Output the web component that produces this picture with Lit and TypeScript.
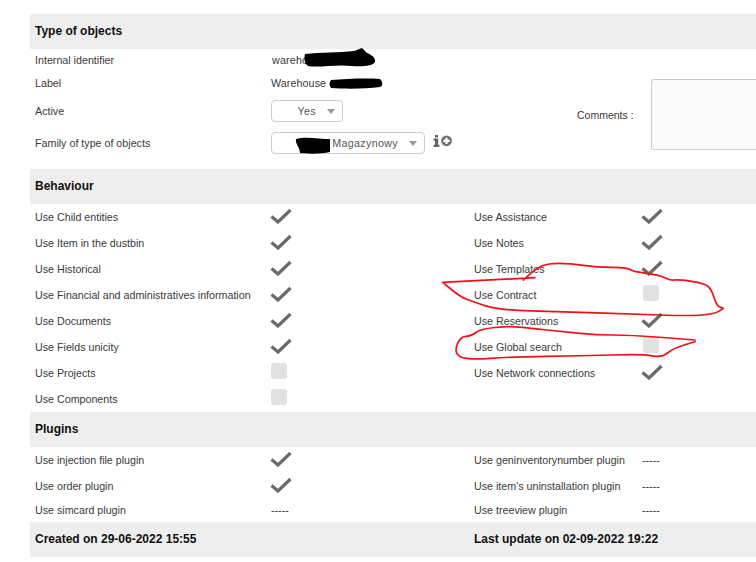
import { LitElement, html, css, svg } from "lit";
import { customElement } from "lit/decorators.js";

type V = "check" | "box" | "none";
const behaviour: [string, V, string, V][] = [
  ["Use Child entities", "check", "Use Assistance", "check"],
  ["Use Item in the dustbin", "check", "Use Notes", "check"],
  ["Use Historical", "check", "Use Templates", "check"],
  ["Use Financial and administratives information", "check", "Use Contract", "box"],
  ["Use Documents", "check", "Use Reservations", "check"],
  ["Use Fields unicity", "check", "Use Global search", "box"],
  ["Use Projects", "box", "Use Network connections", "check"],
  ["Use Components", "box", "", "none"],
];
const plugins: [string, V, string, V][] = [
  ["Use injection file plugin", "check", "Use geninventorynumber plugin", "none"],
  ["Use order plugin", "check", "Use item's uninstallation plugin", "none"],
  ["Use simcard plugin", "none", "Use treeview plugin", "none"],
];

type P = [number, number];
const scribbleA: P[] = [
  [535, 277.7], [500, 279.5], [442.7, 282.3], [442.7, 282.3], [460, 296.7], [473.3, 301.7], [498.3, 310],
  [563.3, 311.7], [630, 314], [690, 316], [715, 314], [723.3, 308.3], [723.3, 308.3], [716.7, 306],
  [711.7, 290], [705, 283.3], [678.3, 279.3], [670, 280.7], [660, 275], [633.3, 271.7], [626.7, 267.3],
  [596.7, 267.3], [570, 263.3], [548.3, 263.3], [536.7, 268.3], [523.3, 280],
];
const scribbleB: P[] = [
  [695, 340], [695, 340], [630, 335], [596.7, 335], [563.3, 331.7], [530, 328.3], [510, 326], [480, 329],
  [471.7, 336], [460, 336.7], [454, 353.3], [466.7, 360], [513.3, 356.7], [580, 356], [643.3, 354],
  [661.7, 357.7], [673.3, 348.3], [695, 341.7],
];

function smooth(pts: P[]): string {
  let d = `M${pts[0][0]} ${pts[0][1]}`;
  for (let i = 1; i < pts.length - 1; i++) {
    const mx = (pts[i][0] + pts[i + 1][0]) / 2;
    const my = (pts[i][1] + pts[i + 1][1]) / 2;
    d += ` Q${pts[i][0]} ${pts[i][1]} ${mx} ${my}`;
  }
  const last = pts[pts.length - 1];
  return d + ` L${last[0]} ${last[1]}`;
}

@customElement("app-root")
export class AppRoot extends LitElement {
  static styles = css`
    :host {
      display: block;
      position: relative;
      width: 756px;
      height: 562px;
      overflow: hidden;
      background: #fff;
      box-sizing: border-box;
      padding: 14px 0 0 30px;
      font-family: "Liberation Sans", Arial, sans-serif;
      font-size: 10.7px;
      color: #3a3a3a;
    }
    .head {
      height: 35px;
      box-sizing: border-box;
      padding: 0 0 2px 5px;
      background: #eee;
      display: flex;
      align-items: center;
      font-size: 12px;
      font-weight: bold;
      color: #111;
    }
    .foot {
      height: 35px;
      box-sizing: border-box;
      padding: 0 0 2px 5px;
      background: #eee;
      display: grid;
      grid-template-columns: 439px 1fr;
      align-items: center;
      font-size: 12px;
      font-weight: bold;
      color: #111;
    }
    .top {
      display: grid;
      grid-template-columns: 236px 306px 74px 1fr;
      grid-template-rows: 22px 23px 34px 30px;
      padding: 0 0 11px 5px;
      align-items: center;
    }
    .comments-label {
      grid-column: 3;
      grid-row: 1 / span 4;
      padding-top: 23px;
      font-size: 10.5px;
    }
    .comments {
      grid-column: 4;
      grid-row: 1 / span 4;
      align-self: start;
      margin-top: 30px;
      height: 71px;
      box-sizing: border-box;
      background: #fafafa;
      border: 1px solid #ccc;
      border-right: none;
      border-radius: 3px 0 0 3px;
    }
    .val-id {
      padding-left: 1px;
      letter-spacing: 0.2px;
    }
    .val-label {
      letter-spacing: 0.1px;
    }
    .field {
      display: flex;
      align-items: center;
    }
    .select {
      height: 22px;
      box-sizing: border-box;
      border: 1px solid #ccc;
      border-radius: 4px;
      background: #fff;
      display: flex;
      align-items: center;
      justify-content: flex-end;
      color: #555;
      padding-right: 7px;
      letter-spacing: 0.35px;
    }
    .s-yes {
      width: 72px;
    }
    .s-family {
      width: 154px;
    }
    .arrow {
      width: 0;
      height: 0;
      border-left: 4px solid transparent;
      border-right: 4px solid transparent;
      border-top: 5px solid #999;
      margin-left: 11px;
    }
    .tools {
      margin: -5px 0 0 8px;
      display: block;
    }
    .grid {
      display: grid;
      grid-template-columns: 236px 203px 168px 1fr;
      grid-auto-rows: 26px;
      padding-left: 5px;
      align-items: center;
    }
    .short {
      grid-auto-rows: auto;
      grid-template-rows: 26px 26px 22px;
      padding-bottom: 1px;
    }
    .check {
      display: block;
      margin: -3px 0 0 -1px;
    }
    .box {
      width: 16px;
      height: 16px;
      border-radius: 3px;
      background: #e2e2e2;
      margin: -4px 0 0 0;
    }
    .right-box {
      margin-left: 1px;
    }
    .dash {
      color: #333;
    }
    .overlay {
      position: absolute;
      left: 0;
      top: 0;
      pointer-events: none;
    }
  `;

  private value(v: V, right: boolean) {
    if (v === "check")
      return html`<svg class="check" width="22" height="16" viewBox="0 0 22 16">
        <path d="M1.5 8.5 L8 14 L20.5 2" fill="none" stroke="#6a6a6a" stroke-width="3.2" />
      </svg>`;
    if (v === "box") return html`<div class="box ${right ? "right-box" : ""}"></div>`;
    return html`<span class="dash">-----</span>`;
  }

  private rows(data: [string, V, string, V][]) {
    return data.map(
      ([a, av, b, bv]) => html`
        <div>${a}</div>
        <div>${this.value(av, false)}</div>
        <div>${b}</div>
        <div>${b ? this.value(bv, true) : ""}</div>
      `
    );
  }

  render() {
    return html`
      <div class="head">Type of objects</div>
      <div class="top">
        <div>Internal identifier</div>
        <div class="val-id">wareho</div>
        <div class="comments-label">Comments :</div>
        <div class="comments"></div>
        <div>Label</div>
        <div class="val-label">Warehouse</div>
        <div>Active</div>
        <div class="field">
          <div class="select s-yes"><span>Yes</span><span class="arrow"></span></div>
        </div>
        <div>Family of type of objects</div>
        <div class="field">
          <div class="select s-family"><span>Magazynowy</span><span class="arrow"></span></div>
          <svg class="tools" width="20" height="12" viewBox="0 0 20 12">
            <path d="M2 0h3v2.4H2z M0.6 3.6h4.6v6.2h1.2V12H0.6V9.8h1.3V5.8H0.6z" fill="#666" />
            <circle cx="13.5" cy="5.8" r="5.4" fill="#707070" />
            <path d="M12.4 2.7h2.2v2h2v2.2h-2v2h-2.2v-2h-2V4.7h2z" fill="#fff" />
          </svg>
        </div>
      </div>
      <div class="head">Behaviour</div>
      <div class="grid">${this.rows(behaviour)}</div>
      <div class="head">Plugins</div>
      <div class="grid short">${this.rows(plugins)}</div>
      <div class="foot">
        <div>Created on 29-06-2022 15:55</div>
        <div>Last update on 02-09-2022 19:22</div>
      </div>
      <svg class="overlay" width="756" height="562" viewBox="0 0 756 562">
        ${svg`
        <path fill="#000" d="M305 54 C320 52 340 53 354 51 L362 48 L367 53 C372 55 376 58 375 62 C373 66 362 67 352 66 C336 64 320 68 308 66 C304 63 304 58 305 54Z" />
        <path fill="#000" d="M331 80 C345 79 365 78 380 79 C383 82 383 86 380 87 C365 89 345 89 331 88 C329 85 329 83 331 80Z" />
        <path fill="#000" d="M296 139 C305 136 320 139 330 139 L330 152 C322 154 308 154 300 153 C300 147 295 144 296 139Z" />
        <path fill="none" stroke="#f0101a" stroke-width="1.7" stroke-linecap="round" stroke-linejoin="round" d="${smooth(scribbleA)}" />
        <path fill="none" stroke="#f0101a" stroke-width="1.7" stroke-linecap="round" stroke-linejoin="round" d="${smooth(scribbleB)}" />
        `}
      </svg>
    `;
  }
}
